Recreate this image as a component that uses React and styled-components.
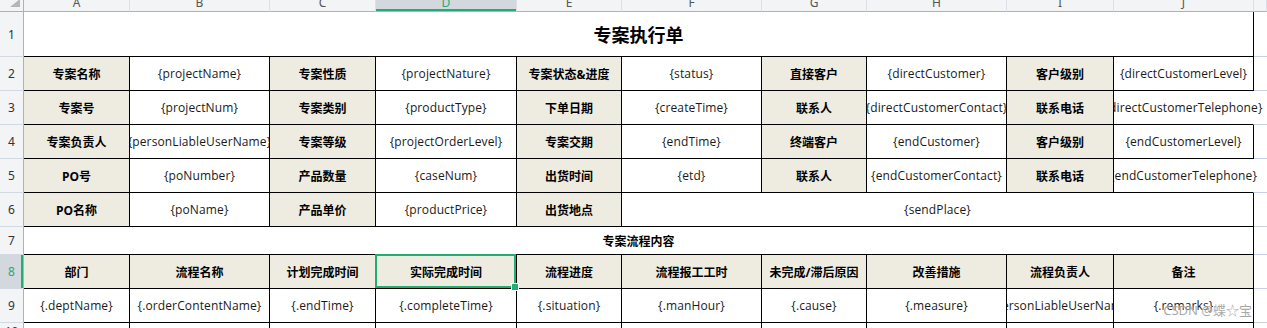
import React from 'react';
import styled, { createGlobalStyle, css } from 'styled-components';

const GREEN = '#22ad72';
const HEAD_BG = '#f3f4f6';
const HEAD_ACTIVE = '#d3d7de';
const HEAD_LINE = '#aab1bf';
const GRID = '#c9d2e4';
const LABEL_BG = '#eeece1';

const Global = createGlobalStyle`
  html, body { margin: 0; padding: 0; background: #fff; }
  body { width: 1267px; height: 328px; overflow: hidden; }
`;

const Sheet = styled.div`
  position: relative;
  display: grid;
  grid-template-columns: 24px 106px 140px 106px 141px 105px 140px 105px 140px 107px 140px 1fr;
  grid-template-rows: 12px 45px repeat(5, 34px) 28px 34px 34px 1fr;
  width: 1267px;
  height: 328px;
  overflow: hidden;
  background: #fff;
  font-family: "Open Sans", "Noto Sans CJK SC", sans-serif;
  font-size: 12px;
  color: #111;
  & * { box-sizing: border-box; }
`;

const Corner = styled.div`
  display: flex;
  justify-content: flex-end;
  align-items: flex-end;
  padding: 0 3px 4px 0;
  background: ${HEAD_BG};
  border-right: 1px solid ${HEAD_LINE};
  border-bottom: 1px solid ${HEAD_LINE};
`;

const ColHead = styled.div`
  background: ${(p) => (p.$active ? HEAD_ACTIVE : HEAD_BG)};
  color: ${(p) => (p.$active ? GREEN : '#555')};
  border-right: 1px solid #dde0e6;
  border-bottom: 1px solid ${HEAD_LINE};
  box-shadow: ${(p) => (p.$active ? `inset 0 -2px 0 ${GREEN}` : 'none')};
  text-align: center;
  line-height: 6px;
  overflow: hidden;
  font-family: "Noto Sans", sans-serif;
`;

const RowHead = styled.div`
  display: flex;
  align-items: center;
  justify-content: center;
  background: ${(p) => (p.$active ? HEAD_ACTIVE : HEAD_BG)};
  color: ${(p) => (p.$active ? GREEN : '#333')};
  border-right: 1px solid ${HEAD_LINE};
  border-bottom: 1px solid #d3d9e3;
  box-shadow: ${(p) => (p.$active ? `inset -2px 0 0 ${GREEN}` : 'none')};
  font-family: "Noto Sans", sans-serif;
  font-size: 12px;
`;

const Cell = styled.div`
  position: relative;
  display: flex;
  align-items: center;
  justify-content: center;
  grid-column: span ${(p) => p.$span || 1};
  white-space: nowrap;
  overflow: hidden;
  background: ${(p) => (p.$label ? LABEL_BG : '#fff')};
  font-weight: ${(p) => (p.$label ? 700 : 400)};
  letter-spacing: ${(p) => (p.$label ? '0' : '0.12px')};
  color: ${(p) => (p.$label ? '#000' : '#1a1a1a')};
  border-right: 1px solid ${(p) => (p.$noRight ? 'transparent' : '#000')};
  border-bottom: 1px solid #000;
  ${(p) =>
    p.$spill &&
    css`
      overflow: visible;
      clip-path: inset(0 -60px 0 0);
      z-index: 1;
    `}
  ${(p) =>
    p.$selected &&
    css`
      overflow: visible;
      &::after {
        content: '';
        position: absolute;
        top: -1px;
        left: -1px;
        right: 0;
        bottom: 0;
        border: 2px solid ${GREEN};
        z-index: 2;
      }
      &::before {
        content: '';
        position: absolute;
        right: -3px;
        bottom: -3px;
        width: 6px;
        height: 6px;
        background: ${GREEN};
        border: 1px solid #fff;
        z-index: 3;
      }
    `}
`;

const TitleCell = styled(Cell)`
  font-size: 18px;
  font-weight: 700;
  letter-spacing: 0;
  color: #000;
  background: #fff;
`;

const SectionCell = styled(Cell)`
  font-size: 12px;
  font-weight: 700;
  letter-spacing: 0;
  color: #000;
  background: #fff;
`;

const OpenCell = styled.div`
  grid-column: span ${(p) => p.$span || 1};
  border-right: 1px solid #000;
`;

const Gutter = styled.div`
  border-bottom: ${(p) => (p.$hideLine ? 'none' : `1px solid ${GRID}`)};
`;

const Watermark = styled.span`
  position: absolute;
  right: 15px;
  bottom: 9px;
  font-family: "Noto Sans", "Noto Sans CJK SC", sans-serif;
  font-size: 13px;
  color: rgba(140, 140, 140, 0.75);
  text-shadow: 0 0 2px #fff;
  z-index: 5;
  pointer-events: none;
`;

const Triangle = () => (
  <svg width="10" height="8" viewBox="0 0 10 8">
    <polygon points="10,0 10,8 0,8" fill="#b4b6ba" />
  </svg>
);

const L = (text) => ({ text, label: true });
const V = (text, extra = {}) => ({ text, ...extra });

const infoRows = [
  [L('专案名称'), V('{projectName}'), L('专案性质'), V('{projectNature}'), L('专案状态&进度'), V('{status}'), L('直接客户'), V('{directCustomer}'), L('客户级别'), V('{directCustomerLevel}')],
  [L('专案号'), V('{projectNum}'), L('专案类别'), V('{productType}'), L('下单日期'), V('{createTime}'), L('联系人'), V('{directCustomerContact}'), L('联系电话'), V('{directCustomerTelephone}', { spill: true })],
  [L('专案负责人'), V('{personLiableUserName}'), L('专案等级'), V('{projectOrderLevel}'), L('专案交期'), V('{endTime}'), L('终端客户'), V('{endCustomer}'), L('客户级别'), V('{endCustomerLevel}')],
  [L('PO号'), V('{poNumber}'), L('产品数量'), V('{caseNum}'), L('出货时间'), V('{etd}'), L('联系人'), V('{endCustomerContact}'), L('联系电话'), V('{endCustomerTelephone}', { spill: true })],
  [L('PO名称'), V('{poName}'), L('产品单价'), V('{productPrice}'), L('出货地点'), V('{sendPlace}', { span: 5 })],
];

const flowHead = ['部门', '流程名称', '计划完成时间', '实际完成时间', '流程进度', '流程报工工时', '未完成/滞后原因', '改善措施', '流程负责人', '备注'];
const flowRow = ['{.deptName}', '{.orderContentName}', '{.endTime}', '{.completeTime}', '{.situation}', '{.manHour}', '{.cause}', '{.measure}', '{.personLiableUserName}', '{.remarks}'];

// Column K is only partly on screen; its letter lies beyond the right edge.
const letters = ['A', 'B', 'C', 'D', 'E', 'F', 'G', 'H', 'I', 'J', ''];

export default function App() {
  return (
    <>
      <Global />
      <Sheet>
        <Corner>
          <Triangle />
        </Corner>
        {letters.map((l, i) => (
          <ColHead key={i} $active={l === 'D'}>
            {l}
          </ColHead>
        ))}

        <RowHead>1</RowHead>
        <TitleCell $span={10}>专案执行单</TitleCell>
        <Gutter />

        {infoRows.map((row, i) => (
          <React.Fragment key={i}>
            <RowHead>{i + 2}</RowHead>
            {row.map((c, j) => (
              <Cell key={j} $label={c.label} $span={c.span} $spill={c.spill} $noRight={c.spill}>
                <span>{c.text}</span>
              </Cell>
            ))}
            <Gutter />
          </React.Fragment>
        ))}

        <RowHead>7</RowHead>
        <SectionCell $span={10}>专案流程内容</SectionCell>
        <Gutter />

        <RowHead $active>8</RowHead>
        {flowHead.map((t, j) => (
          <Cell key={t} $label $selected={j === 3}>
            <span>{t}</span>
          </Cell>
        ))}
        <Gutter />

        <RowHead>9</RowHead>
        {flowRow.map((t) => (
          <Cell key={t}>
            <span>{t}</span>
          </Cell>
        ))}
        <Gutter />

        <RowHead>10</RowHead>
        {flowRow.map((t) => (
          <OpenCell key={t} />
        ))}
        <Gutter $hideLine />

        <Watermark>CSDN @蝶☆宝</Watermark>
      </Sheet>
    </>
  );
}
